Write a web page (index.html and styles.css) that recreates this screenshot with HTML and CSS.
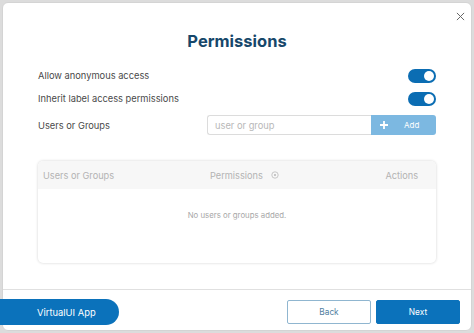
FILE: index.html
```html
<!DOCTYPE html>
<html lang="en">
<head>
  <meta charset="UTF-8">
  <meta name="viewport" content="width=device-width, initial-scale=1.0">
  <title>Permissions</title>
  <link rel="stylesheet" href="styles.css">
</head>
<body>
  <div class="dialog">
    <button class="close" aria-label="Close">
      <svg width="9" height="9" viewBox="0 0 10 10"><path d="M1 1L9 9M9 1L1 9" stroke="#666" stroke-width="1.1" fill="none"/></svg>
    </button>

    <div class="dialog-body">
      <h1 class="title">Permissions</h1>

      <div class="row">
        <span class="label">Allow anonymous access</span>
        <span class="toggle on"><span class="knob"></span></span>
      </div>
      <div class="row">
        <span class="label">Inherit label access permissions</span>
        <span class="toggle on"><span class="knob"></span></span>
      </div>
      <div class="row row-input">
        <span class="label">Users or Groups</span>
        <div class="add-group">
          <input type="text" placeholder="user or group">
          <button class="add-btn">
            <svg width="8" height="8" viewBox="0 0 8 8"><path d="M4 0V8M0 4H8" stroke="#fff" stroke-width="1.8"/></svg>
            <span>Add</span>
          </button>
        </div>
      </div>

      <div class="table">
        <div class="table-head">
          <span class="col-users">Users or Groups</span>
          <span class="col-perm">Permissions
            <svg width="8" height="8" viewBox="0 0 10 10"><circle cx="5" cy="5" r="4" stroke="#bbb" stroke-width="1" fill="none"/><circle cx="5" cy="5" r="1.4" fill="#bbb"/></svg>
          </span>
          <span class="col-actions">Actions</span>
        </div>
        <div class="table-empty">No users or groups added.</div>
      </div>
    </div>

    <div class="dialog-footer">
      <button class="btn btn-outline">Back</button>
      <button class="btn btn-primary">Next</button>
    </div>

    <button class="app-badge">VirtualUI App</button>
  </div>
</body>
</html>
```

FILE: styles.css
```css
body {
  margin: 0;
  padding: 0;
  background-color: #dcdcdc;
  font-family: 'Inter', 'Roboto', sans-serif;
  overflow: hidden;
}

.dialog {
  position: relative;
  margin: 2px 2px 0 2px;
  width: 470px;
  height: 329px;
  box-sizing: border-box;
  background-color: #ffffff;
  border: 1px solid #d4d4d4;
  border-radius: 6px;
  display: flex;
  flex-direction: column;
}

.close {
  position: absolute;
  top: 7px;
  right: 5px;
  width: 12px;
  height: 12px;
  padding: 0;
  border: none;
  background: none;
  display: flex;
  align-items: center;
  justify-content: center;
}

.dialog-body {
  flex: 1;
  padding: 26px 35px 0 35px;
}

.title {
  margin: 0 0 11px 0;
  font-size: 16.5px;
  line-height: 24px;
  font-weight: 700;
  color: #17476a;
  text-align: center;
}

.row {
  display: flex;
  align-items: center;
  justify-content: space-between;
  height: 23px;
}

.row-input {
  height: 24px;
  margin-top: 3px;
}

.label {
  font-size: 9.3px;
  color: #4a4a4a;
}

.toggle {
  width: 28px;
  height: 14px;
  border-radius: 7px;
  background-color: #0b6db3;
  display: flex;
  align-items: center;
  justify-content: flex-end;
  padding: 0 2px;
  box-sizing: border-box;
}

.knob {
  width: 10px;
  height: 10px;
  border-radius: 50%;
  background-color: #ffffff;
}

.add-group {
  display: flex;
  height: 20px;
}

.add-group input {
  width: 164px;
  height: 20px;
  box-sizing: border-box;
  border: 1px solid #dcdcdc;
  border-right: none;
  border-radius: 3px 0 0 3px;
  padding: 0 7px;
  font-family: inherit;
  font-size: 9.3px;
  color: #444;
  outline: none;
}

.add-group input::placeholder {
  color: #b8b8b8;
}

.add-btn {
  width: 65px;
  height: 20px;
  border: none;
  border-radius: 0 3px 3px 0;
  background-color: #7cb8e1;
  color: #ffffff;
  font-family: inherit;
  font-size: 8px;
  display: flex;
  align-items: center;
  padding: 0 0 0 9px;
  gap: 16px;
}

.table {
  margin-top: 24px;
  height: 102px;
  border-radius: 5px;
  background-color: #ffffff;
  box-shadow: 0 0 3px rgba(0, 0, 0, 0.18);
  overflow: hidden;
}

.table-head {
  height: 28px;
  background-color: #f7f7f7;
  display: flex;
  align-items: center;
  padding: 0 18px 0 5px;
  font-size: 9.2px;
  color: #b3b3b3;
}

.col-users {
  width: 167px;
}

.col-perm {
  flex: 1;
  display: flex;
  align-items: center;
  gap: 8px;
}

.table-empty {
  text-align: center;
  font-size: 7.8px;
  color: #a8a8a8;
  padding-top: 21px;
}

.dialog-footer {
  height: 41px;
  border-top: 1px solid #e0e0e0;
  display: flex;
  justify-content: flex-end;
  align-items: flex-start;
  gap: 5px;
  padding: 10px 11px 0 0;
  box-sizing: border-box;
}

.btn {
  width: 84px;
  height: 24px;
  border-radius: 2px;
  font-family: inherit;
  font-size: 8.3px;
}

.btn-outline {
  background-color: #ffffff;
  border: 1px solid #90b6d0;
  color: #52809f;
}

.btn-primary {
  background-color: #0b72bb;
  border: 1px solid #0b72bb;
  color: #ffffff;
}

.app-badge {
  position: absolute;
  left: -3px;
  top: 296px;
  width: 119px;
  height: 26px;
  padding-left: 37px;
  border: none;
  border-radius: 0 13px 13px 0;
  background-color: #0b72bb;
  color: #ffffff;
  font-family: inherit;
  font-size: 9.4px;
  text-align: left;
}
```
